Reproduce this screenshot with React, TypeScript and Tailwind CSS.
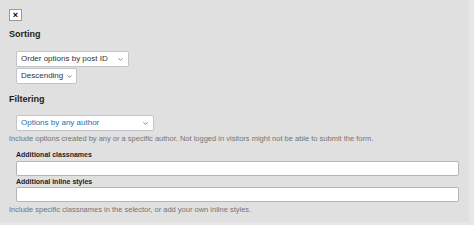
import { ChevronDown } from "lucide-react";

function Select({ label, width, blue }: { label: string; width: string; blue?: boolean }) {
  return (
    <div
      className={`flex h-[16px] items-center justify-between gap-[3px] rounded-[2px] border border-[#c3c4c7] bg-white pl-[4px] pr-[4px] text-[8px] ${width} ${
        blue ? "text-[#2271b1]" : "text-[#2c3338]"
      }`}
    >
      <span className="whitespace-nowrap">{label}</span>
      <ChevronDown className="h-[7px] w-[7px] shrink-0 text-[#50575e]" strokeWidth={2.5} />
    </div>
  );
}

export default function App() {
  return (
    <div className="h-[225px] w-[474px] bg-[#e7e7e7] font-['Liberation_Sans',Arial,sans-serif]">
      <div className="h-[222px] w-[469px] bg-[#e0e0e0] pl-[9px] pt-[9px]">
        <button className="flex h-[12px] w-[13px] items-center justify-center border border-[#9a9a9a] bg-white text-[9px] font-bold leading-none text-black">
          ×
        </button>

        <h3 className="mt-[8px] text-[9px] font-bold leading-[11px] text-[#1e1e1e]">Sorting</h3>
        <div className="ml-[7px] mt-[11px] flex flex-col gap-[1px]">
          <Select label="Order options by post ID" width="w-[113px]" />
          <Select label="Descending" width="w-[61px]" />
        </div>

        <h3 className="mt-[10px] text-[9px] font-bold leading-[11px] text-[#1e1e1e]">Filtering</h3>
        <div className="ml-[7px] mt-[10px]">
          <Select label="Options by any author" width="w-[138px]" blue />
        </div>
        <p className="mt-[3px] text-[7.5px] leading-[9px] text-[#757575]">
          Include options created by any or a specific author. Not logged in visitors might not be able to submit the form.
        </p>

        <div className="ml-[7px] mt-[7px] w-[443px]">
          <label className="block text-[7px] font-bold leading-[9px] text-[#1e1e1e]">Additional classnames</label>
          <input className="mt-[2px] block h-[15px] w-full rounded-[2px] border border-[#b5b5b5] bg-white" />
          <label className="mt-[1px] block text-[7px] font-bold leading-[9px] text-[#1e1e1e]">Additional inline styles</label>
          <input className="mt-[1px] block h-[15px] w-full rounded-[2px] border border-[#b5b5b5] bg-white" />
        </div>
        <p className="mt-[3px] text-[7.5px] leading-[9px] text-[#757575]">
          Include specific classnames in the selector, or add your own inline styles.
        </p>
      </div>
    </div>
  );
}
